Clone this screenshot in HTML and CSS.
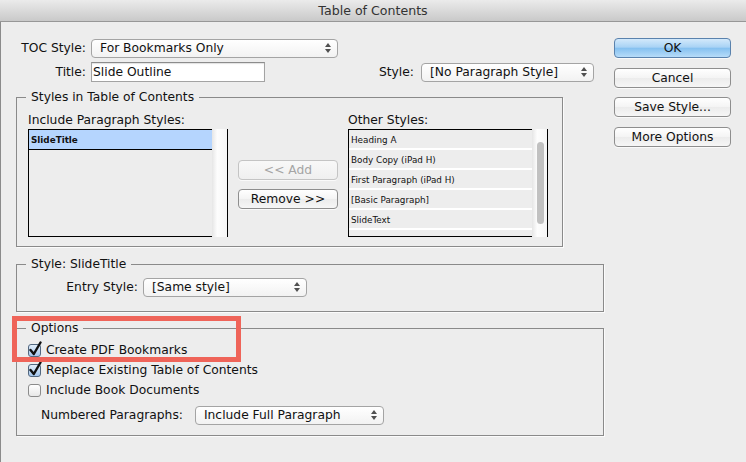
FILE: index.html
```html
<!DOCTYPE html>
<html lang="en">
<head>
    <meta charset="UTF-8">
    <title>Table of Contents</title>
    <link rel="stylesheet" href="styles.css">
</head>
<body>
    <div class="titlebar">Table of Contents</div>

    <div class="window">
        <div class="main">
            <div class="field-row">
                <span class="label">TOC Style:</span>
                <div class="popup toc-style">
                    <span>For Bookmarks Only</span>
                    <svg class="arrows" width="6" height="10" viewBox="0 0 6 10"><path d="M0 4 L3 0 L6 4 Z M0 6 L3 10 L6 6 Z" fill="#505050"/></svg>
                </div>
            </div>
            <div class="field-row second">
                <span class="label">Title:</span>
                <div class="text-input">Slide Outline</div>
                <div class="style-pick">
                    <span class="plain-label">Style:</span>
                    <div class="popup para-style">
                        <span>[No Paragraph Style]</span>
                        <svg class="arrows" width="6" height="10" viewBox="0 0 6 10"><path d="M0 4 L3 0 L6 4 Z M0 6 L3 10 L6 6 Z" fill="#505050"/></svg>
                    </div>
                </div>
            </div>

            <fieldset class="group styles-group">
                <legend>Styles in Table of Contents</legend>
                <div class="columns">
                    <div class="col">
                        <div class="col-label">Include Paragraph Styles:</div>
                        <div class="list">
                            <div class="items">
                                <div class="item selected">SlideTitle</div>
                            </div>
                            <div class="track"></div>
                        </div>
                    </div>
                    <div class="move-buttons">
                        <div class="btn disabled">&lt;&lt; Add</div>
                        <div class="btn">Remove &gt;&gt;</div>
                    </div>
                    <div class="col">
                        <div class="col-label">Other Styles:</div>
                        <div class="list">
                            <div class="items">
                                <div class="item">Heading A</div>
                                <div class="item">Body Copy (iPad H)</div>
                                <div class="item">First Paragraph (iPad H)</div>
                                <div class="item">[Basic Paragraph]</div>
                                <div class="item">SlideText</div>
                                <div class="item"></div>
                            </div>
                            <div class="track"><div class="thumb"></div></div>
                        </div>
                    </div>
                </div>
            </fieldset>

            <fieldset class="group entry-group">
                <legend>Style: SlideTitle</legend>
                <div class="field-row">
                    <span class="label entry-label">Entry Style:</span>
                    <div class="popup entry-style">
                        <span>[Same style]</span>
                        <svg class="arrows" width="6" height="10" viewBox="0 0 6 10"><path d="M0 4 L3 0 L6 4 Z M0 6 L3 10 L6 6 Z" fill="#505050"/></svg>
                    </div>
                </div>
            </fieldset>

            <fieldset class="group options-group">
                <legend>Options</legend>
                <div class="check-row">
                    <span class="cb on">
                        <svg width="15" height="16" viewBox="0 0 15 16"><path d="M2.5 9 L5.8 13 L12.5 1.5" fill="none" stroke="#111" stroke-width="2.4" stroke-linecap="round" stroke-linejoin="round"/></svg>
                    </span>
                    <span>Create PDF Bookmarks</span>
                </div>
                <div class="check-row">
                    <span class="cb on">
                        <svg width="15" height="16" viewBox="0 0 15 16"><path d="M2.5 9 L5.8 13 L12.5 1.5" fill="none" stroke="#111" stroke-width="2.4" stroke-linecap="round" stroke-linejoin="round"/></svg>
                    </span>
                    <span>Replace Existing Table of Contents</span>
                </div>
                <div class="check-row">
                    <span class="cb"></span>
                    <span>Include Book Documents</span>
                </div>
                <div class="field-row numbered">
                    <span class="plain-label num-label">Numbered Paragraphs:</span>
                    <div class="popup num-style">
                        <span>Include Full Paragraph</span>
                        <svg class="arrows" width="6" height="10" viewBox="0 0 6 10"><path d="M0 4 L3 0 L6 4 Z M0 6 L3 10 L6 6 Z" fill="#505050"/></svg>
                    </div>
                </div>
            </fieldset>
        </div>

        <div class="side">
            <div class="btn default">OK</div>
            <div class="btn">Cancel</div>
            <div class="btn">Save Style...</div>
            <div class="btn">More Options</div>
        </div>
    </div>

    <div class="highlight"></div>
</body>
</html>
```

FILE: styles.css
```css
body {
    margin: 0;
    width: 746px;
    height: 462px;
    overflow: hidden;
    position: relative;
    background-color: #ededed;
    color: #111;
    font-family: "DejaVu Sans", Verdana, sans-serif;
    font-size: 12.3px;
}

.titlebar {
    height: 21px;
    line-height: 22px;
    text-align: center;
    font-size: 12.6px;
    color: #333;
    background: linear-gradient(#ebebeb, #c9c9c9);
    border-bottom: 1px solid #979797;
}

.window {
    display: flex;
    height: 440px;
    box-sizing: border-box;
    padding: 16px 0 0 15px;
    border-left: 1px solid #8b8b8b;
}

.main {
    width: 588px;
}

/* Right button column */
.side {
    margin-left: 10px;
    width: 117px;
    display: flex;
    flex-direction: column;
    gap: 9.6px;
}

.btn {
    height: 20px;
    line-height: 18px;
    box-sizing: border-box;
    text-align: center;
    border: 1px solid #8e8e8e;
    border-radius: 4px;
    background: linear-gradient(#ffffff, #f4f4f4 50%, #ececec 51%, #f6f6f6);
    box-shadow: 0 1px 0 rgba(255, 255, 255, 0.7);
}

.btn.default {
    border-color: #5a82ad;
    background: linear-gradient(#d3e9fb, #a9d3f5 45%, #86c1f0 52%, #b7dcf9);
}

.btn.disabled {
    color: #a5a5a5;
    border-color: #c4c4c4;
    background: linear-gradient(#f8f8f8, #efefef);
}

/* Label + control rows */
.field-row {
    display: flex;
    align-items: center;
    height: 20px;
}

.field-row.second {
    margin-top: 4px;
}

.label {
    width: 70px;
    margin-right: 5px;
    text-align: right;
    white-space: nowrap;
}

.plain-label {
    white-space: nowrap;
}

.popup {
    display: flex;
    align-items: center;
    height: 19px;
    box-sizing: border-box;
    padding-left: 8px;
    border: 1px solid #a4a4a4;
    border-radius: 4px;
    background: linear-gradient(#ffffff, #f2f2f2);
    white-space: nowrap;
}

.popup .arrows {
    margin-left: auto;
    margin-right: 6px;
}

.toc-style { width: 247px; }
.para-style { width: 173px; }
.entry-style { width: 164px; }
.num-style { width: 189px; }

.text-input {
    width: 174px;
    height: 20px;
    line-height: 18px;
    box-sizing: border-box;
    padding-left: 1px;
    border: 1px solid #a3a3a3;
    border-top-color: #8c8c8c;
    background-color: #fff;
    box-shadow: inset 0 1px 1px rgba(0, 0, 0, 0.12);
}

.style-pick {
    display: flex;
    align-items: center;
    margin-left: auto;
    margin-right: 10px;
    gap: 7px;
}

/* Group boxes */
.group {
    margin: 0;
    min-width: 0;
    box-sizing: border-box;
    border: 1px solid #8a8a8a;
    box-shadow: 1px 1px 0 #fbfbfb;
}

.group legend {
    margin-left: -2px;
    padding: 0 5px;
    line-height: 16px;
}

.styles-group {
    width: 547px;
    margin-top: 7px;
    padding: 7px 14px 9px 11px;
}

.entry-group {
    width: 588px;
    margin-top: 9px;
    padding: 5px 14px 14px 11px;
}

.options-group {
    width: 588px;
    margin-top: 8px;
    padding: 4px 14px 10px 11px;
}

.columns {
    display: flex;
    gap: 10px;
}

.col {
    width: 200px;
}

.col-label {
    line-height: 16px;
    white-space: nowrap;
}

.list {
    display: flex;
    height: 108px;
    margin-top: 1px;
    border-right: 1px solid #000;
}

.items {
    flex: 1;
    overflow: hidden;
    border: 1px solid #000;
    border-right: 0;
    background-color: #ededed;
}

.item {
    height: 18px;
    line-height: 20px;
    padding-left: 2px;
    font-size: 8.8px;
    border-bottom: 2px solid #fff;
    white-space: nowrap;
    overflow: hidden;
}

.item.selected {
    height: 19px;
    line-height: 20px;
    font-weight: bold;
    background-color: #b5d5fe;
    border-bottom: 1px solid #000;
}

.track {
    width: 15px;
    position: relative;
    background: linear-gradient(to right, #e6e6e6, #fdfdfd 35%, #f6f6f6);
}

.thumb {
    position: absolute;
    left: 5px;
    top: 13px;
    width: 7px;
    height: 82px;
    border-radius: 4px;
    background-color: #c1c1c1;
}

.move-buttons {
    width: 100px;
    padding-top: 48px;
    display: flex;
    flex-direction: column;
    gap: 9px;
}

.entry-label {
    width: 110px;
}

/* Checkboxes */
.check-row {
    display: flex;
    align-items: center;
    height: 20px;
    white-space: nowrap;
}

.cb {
    position: relative;
    width: 13px;
    height: 13px;
    margin-right: 5px;
    box-sizing: border-box;
    border: 1px solid #8b8b8b;
    border-radius: 3px;
    background: linear-gradient(#ffffff, #e8e8e8);
}

.cb.on {
    border-color: #52677f;
    background: linear-gradient(#e2eefa, #a3c5ec);
}

.cb svg {
    position: absolute;
    left: -1px;
    top: -4px;
}

.field-row.numbered {
    margin-top: 5px;
}

.num-label {
    margin-left: 13px;
    margin-right: 12px;
}

/* Red callout drawn over the Options box */
.highlight {
    position: absolute;
    left: 12px;
    top: 316px;
    width: 229px;
    height: 46px;
    box-sizing: border-box;
    border: 5px solid #ef6459;
}
```
